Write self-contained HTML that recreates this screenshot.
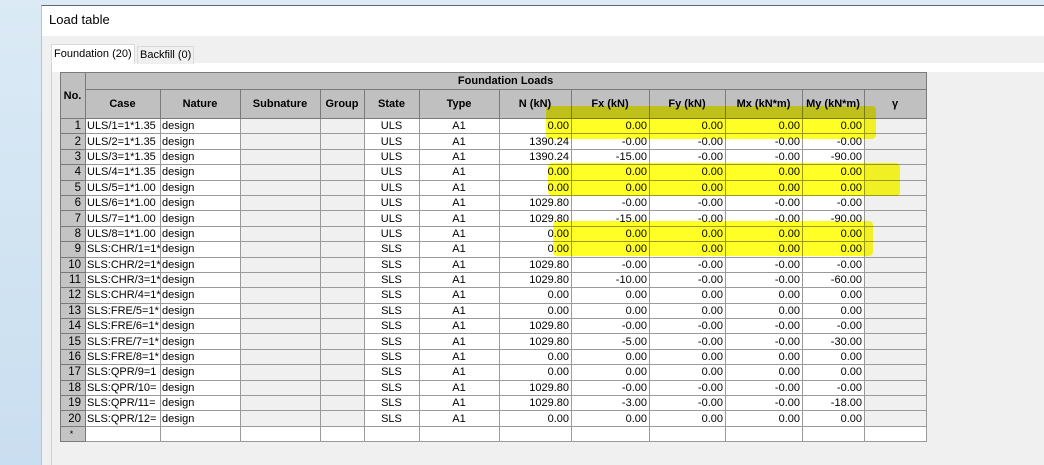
<!DOCTYPE html>
<html style="overflow:hidden"><head><style>
html,body{margin:0;width:1044px;height:465px;overflow:hidden}
body{position:relative;font-family:"Liberation Sans",Arial,sans-serif;background:linear-gradient(180deg,#dbeaf5,#c9def0);}
#win{position:absolute;left:41px;top:5px;width:1003px;height:460px;background:#f0f0f0;border-top:1px solid #5a6b78;border-left:1px solid #b8c4cc;overflow:hidden}
#title{position:absolute;left:0;top:0;right:0;height:30px;background:#fff;font-size:13px;line-height:28px;padding-left:7px;color:#000}
#tabs{position:absolute;left:9px;top:40px;font-size:11px}
.tab{position:absolute;top:0;height:17px;line-height:17px;padding:0 2px;border:1px solid #d9d9d9;border-bottom:none;background:#f0f0f0;white-space:nowrap}
#panel{position:absolute;left:9px;top:57px;width:1000px;height:410px;background:#f0f0f0;border-left:1px solid #d0d0d0;border-top:1px solid #d9d9d9}
#panelwhite{position:absolute;left:10px;top:57px;width:1000px;height:9px;background:#fff}
table{position:absolute;left:60px;top:72px;width:866px;border-collapse:collapse;table-layout:fixed;font-size:11px;background:#fff}
td,th{border:1px solid #9a9a9a;padding:0 2px 0 1px;height:14.4px;line-height:14px;white-space:nowrap;overflow:hidden}
th{background:#c0c0c0;font-size:11px;font-weight:bold;border-color:#7a7a7a}
tr.h1 th{height:16px}
tr.h2 th{height:28px}
td.n{background:#c4c4c4;text-align:right;border-color:#7a7a7a;padding-right:4px;font-size:11.5px}
td.g{background:#f0f0f0}
td.c{text-align:center}
td.r{text-align:right}
.y{position:absolute;background:rgba(255,255,0,0.85);mix-blend-mode:multiply}
</style></head><body>
<div id="win">
<div id="title">Load table</div>
<div id="panel"></div><div id="panelwhite"></div>
<div id="tabs"><div class="tab" style="left:0;background:#fff;height:19px;top:-2px;line-height:19px">Foundation (20)</div><div class="tab" style="left:86px">Backfill (0)</div></div>
</div>
<table>
<colgroup><col style="width:25px"><col style="width:75px"><col style="width:80px"><col style="width:80px"><col style="width:44px"><col style="width:55px"><col style="width:80px"><col style="width:72px"><col style="width:78px"><col style="width:76px"><col style="width:77px"><col style="width:62px"><col style="width:62px"></colgroup>
<tr class="h1"><th rowspan="2">No.</th><th colspan="12">Foundation Loads</th></tr>
<tr class="h2"><th>Case</th><th>Nature</th><th>Subnature</th><th>Group</th><th>State</th><th>Type</th><th>N (kN)</th><th>Fx (kN)</th><th>Fy (kN)</th><th>Mx (kN*m)</th><th>My (kN*m)</th><th>γ</th></tr>
<tr><td class="n">1</td><td>ULS/1=1*1.35</td><td>design</td><td class="g"></td><td class="g"></td><td class="c">ULS</td><td class="c">A1</td><td class="r">0.00</td><td class="r">0.00</td><td class="r">0.00</td><td class="r">0.00</td><td class="r">0.00</td><td class="g"></td></tr>
<tr><td class="n">2</td><td>ULS/2=1*1.35</td><td>design</td><td class="g"></td><td class="g"></td><td class="c">ULS</td><td class="c">A1</td><td class="r">1390.24</td><td class="r">-0.00</td><td class="r">-0.00</td><td class="r">-0.00</td><td class="r">-0.00</td><td class="g"></td></tr>
<tr><td class="n">3</td><td>ULS/3=1*1.35</td><td>design</td><td class="g"></td><td class="g"></td><td class="c">ULS</td><td class="c">A1</td><td class="r">1390.24</td><td class="r">-15.00</td><td class="r">-0.00</td><td class="r">-0.00</td><td class="r">-90.00</td><td class="g"></td></tr>
<tr><td class="n">4</td><td>ULS/4=1*1.35</td><td>design</td><td class="g"></td><td class="g"></td><td class="c">ULS</td><td class="c">A1</td><td class="r">0.00</td><td class="r">0.00</td><td class="r">0.00</td><td class="r">0.00</td><td class="r">0.00</td><td class="g"></td></tr>
<tr><td class="n">5</td><td>ULS/5=1*1.00</td><td>design</td><td class="g"></td><td class="g"></td><td class="c">ULS</td><td class="c">A1</td><td class="r">0.00</td><td class="r">0.00</td><td class="r">0.00</td><td class="r">0.00</td><td class="r">0.00</td><td class="g"></td></tr>
<tr><td class="n">6</td><td>ULS/6=1*1.00</td><td>design</td><td class="g"></td><td class="g"></td><td class="c">ULS</td><td class="c">A1</td><td class="r">1029.80</td><td class="r">-0.00</td><td class="r">-0.00</td><td class="r">-0.00</td><td class="r">-0.00</td><td class="g"></td></tr>
<tr><td class="n">7</td><td>ULS/7=1*1.00</td><td>design</td><td class="g"></td><td class="g"></td><td class="c">ULS</td><td class="c">A1</td><td class="r">1029.80</td><td class="r">-15.00</td><td class="r">-0.00</td><td class="r">-0.00</td><td class="r">-90.00</td><td class="g"></td></tr>
<tr><td class="n">8</td><td>ULS/8=1*1.00</td><td>design</td><td class="g"></td><td class="g"></td><td class="c">ULS</td><td class="c">A1</td><td class="r">0.00</td><td class="r">0.00</td><td class="r">0.00</td><td class="r">0.00</td><td class="r">0.00</td><td class="g"></td></tr>
<tr><td class="n">9</td><td>SLS:CHR/1=1*</td><td>design</td><td class="g"></td><td class="g"></td><td class="c">SLS</td><td class="c">A1</td><td class="r">0.00</td><td class="r">0.00</td><td class="r">0.00</td><td class="r">0.00</td><td class="r">0.00</td><td class="g"></td></tr>
<tr><td class="n">10</td><td>SLS:CHR/2=1*</td><td>design</td><td class="g"></td><td class="g"></td><td class="c">SLS</td><td class="c">A1</td><td class="r">1029.80</td><td class="r">-0.00</td><td class="r">-0.00</td><td class="r">-0.00</td><td class="r">-0.00</td><td class="g"></td></tr>
<tr><td class="n">11</td><td>SLS:CHR/3=1*</td><td>design</td><td class="g"></td><td class="g"></td><td class="c">SLS</td><td class="c">A1</td><td class="r">1029.80</td><td class="r">-10.00</td><td class="r">-0.00</td><td class="r">-0.00</td><td class="r">-60.00</td><td class="g"></td></tr>
<tr><td class="n">12</td><td>SLS:CHR/4=1*</td><td>design</td><td class="g"></td><td class="g"></td><td class="c">SLS</td><td class="c">A1</td><td class="r">0.00</td><td class="r">0.00</td><td class="r">0.00</td><td class="r">0.00</td><td class="r">0.00</td><td class="g"></td></tr>
<tr><td class="n">13</td><td>SLS:FRE/5=1*</td><td>design</td><td class="g"></td><td class="g"></td><td class="c">SLS</td><td class="c">A1</td><td class="r">0.00</td><td class="r">0.00</td><td class="r">0.00</td><td class="r">0.00</td><td class="r">0.00</td><td class="g"></td></tr>
<tr><td class="n">14</td><td>SLS:FRE/6=1*</td><td>design</td><td class="g"></td><td class="g"></td><td class="c">SLS</td><td class="c">A1</td><td class="r">1029.80</td><td class="r">-0.00</td><td class="r">-0.00</td><td class="r">-0.00</td><td class="r">-0.00</td><td class="g"></td></tr>
<tr><td class="n">15</td><td>SLS:FRE/7=1*</td><td>design</td><td class="g"></td><td class="g"></td><td class="c">SLS</td><td class="c">A1</td><td class="r">1029.80</td><td class="r">-5.00</td><td class="r">-0.00</td><td class="r">-0.00</td><td class="r">-30.00</td><td class="g"></td></tr>
<tr><td class="n">16</td><td>SLS:FRE/8=1*</td><td>design</td><td class="g"></td><td class="g"></td><td class="c">SLS</td><td class="c">A1</td><td class="r">0.00</td><td class="r">0.00</td><td class="r">0.00</td><td class="r">0.00</td><td class="r">0.00</td><td class="g"></td></tr>
<tr><td class="n">17</td><td>SLS:QPR/9=1</td><td>design</td><td class="g"></td><td class="g"></td><td class="c">SLS</td><td class="c">A1</td><td class="r">0.00</td><td class="r">0.00</td><td class="r">0.00</td><td class="r">0.00</td><td class="r">0.00</td><td class="g"></td></tr>
<tr><td class="n">18</td><td>SLS:QPR/10=</td><td>design</td><td class="g"></td><td class="g"></td><td class="c">SLS</td><td class="c">A1</td><td class="r">1029.80</td><td class="r">-0.00</td><td class="r">-0.00</td><td class="r">-0.00</td><td class="r">-0.00</td><td class="g"></td></tr>
<tr><td class="n">19</td><td>SLS:QPR/11=</td><td>design</td><td class="g"></td><td class="g"></td><td class="c">SLS</td><td class="c">A1</td><td class="r">1029.80</td><td class="r">-3.00</td><td class="r">-0.00</td><td class="r">-0.00</td><td class="r">-18.00</td><td class="g"></td></tr>
<tr><td class="n">20</td><td>SLS:QPR/12=</td><td>design</td><td class="g"></td><td class="g"></td><td class="c">SLS</td><td class="c">A1</td><td class="r">0.00</td><td class="r">0.00</td><td class="r">0.00</td><td class="r">0.00</td><td class="r">0.00</td><td class="g"></td></tr>
<tr><td class="n" style="text-align:center;font-size:9px">*</td><td></td><td></td><td></td><td></td><td></td><td></td><td></td><td></td><td></td><td></td><td></td><td></td></tr>
</table>
<div class="y" style="left:546px;top:106px;width:330px;height:33px;border-radius:4px"></div>
<div class="y" style="left:548px;top:163px;width:352px;height:33px;border-radius:4px"></div>
<div class="y" style="left:553px;top:221px;width:320px;height:35px;border-radius:4px"></div>
</body></html>
